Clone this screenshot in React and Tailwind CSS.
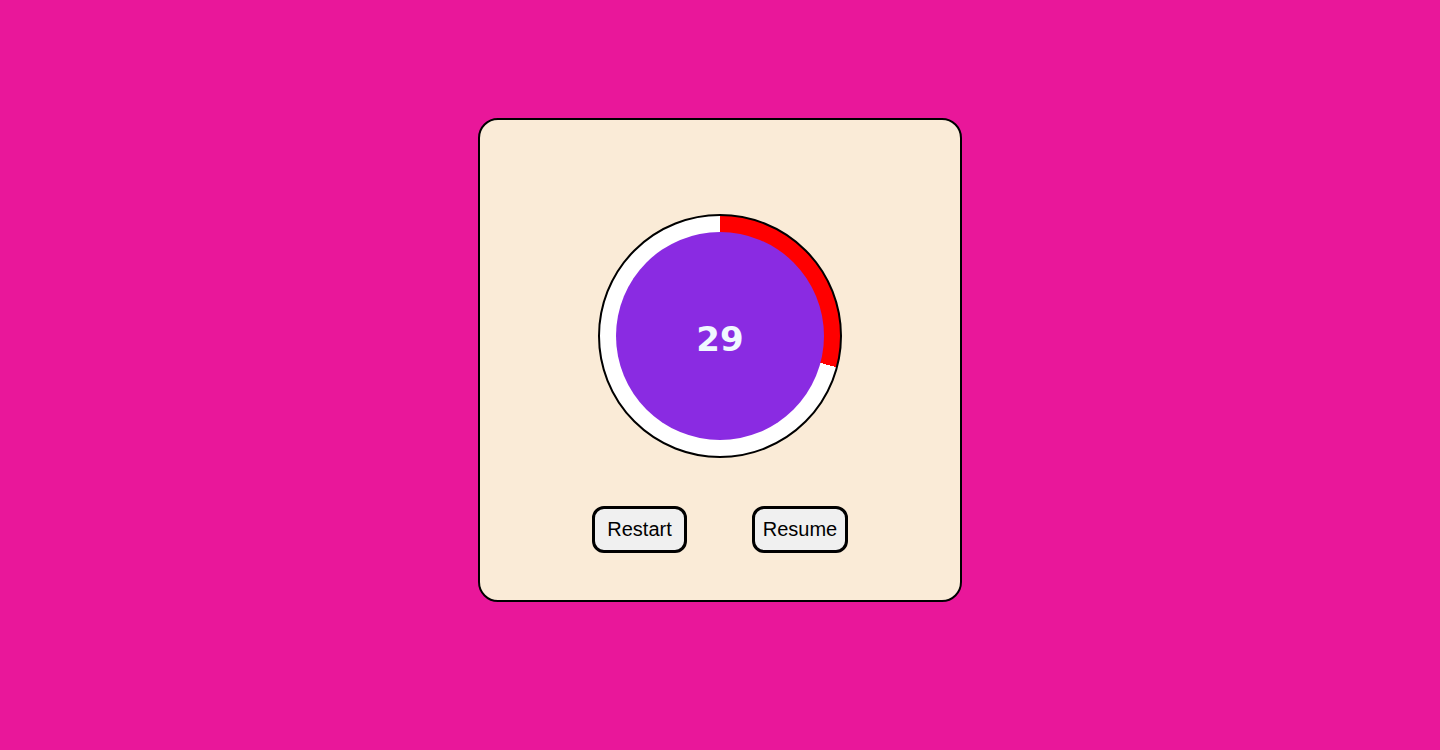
export default function App() {
  return (
    <div className="min-h-[750px] w-full bg-[#e9179a] flex justify-center pt-[118px]">
      <div className="w-[484px] h-[484px] bg-[#faebd7] border-[2.5px] border-black rounded-[20px] flex flex-col items-center pt-[93.5px]">
        <div className="w-[244px] h-[244px] rounded-full border-2 border-black bg-[conic-gradient(#ff0000_0deg_105deg,#ffffff_105deg_360deg)] flex items-center justify-center">
          <div className="w-[208px] h-[208px] rounded-full bg-[#8a2be2] flex items-center justify-center">
            <span className="text-[34px] font-bold text-[#f0f8ff] leading-none pt-[6px]" style={{ fontFamily: '"DejaVu Sans", Verdana, sans-serif' }}>29</span>
          </div>
        </div>
        <div className="mt-[48px] flex gap-[65px]">
          <button className="w-[95px] h-[47px] border-[3px] border-black rounded-[12px] bg-[#f0f0f0] text-[20px] text-black flex items-center justify-center" style={{ fontFamily: '"Liberation Sans", Arial, sans-serif' }}>Restart</button>
          <button className="w-[96px] h-[47px] border-[3px] border-black rounded-[12px] bg-[#f0f0f0] text-[20px] text-black flex items-center justify-center" style={{ fontFamily: '"Liberation Sans", Arial, sans-serif' }}>Resume</button>
        </div>
      </div>
    </div>
  );
}
